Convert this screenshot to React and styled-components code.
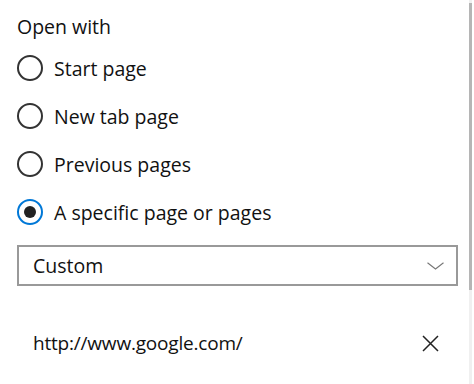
import React from "react";
import styled, { createGlobalStyle } from "styled-components";

const Global = createGlobalStyle`
  html, body { margin: 0; padding: 0; background: #fff; }
  body { font-family: "Open Sans", "Noto Sans", sans-serif; color: #111; }
`;

const Page = styled.div`
  display: flex;
  width: 474px;
  height: 384px;
  overflow: hidden;
  background: #fff;
`;

const Content = styled.div`
  flex: 1;
  display: flex;
  flex-direction: column;
  padding: 14px 11px 0 17px;
`;

const Title = styled.div`
  font-size: 19.5px;
  line-height: 26px;
  height: 30px;
`;

const Option = styled.label`
  display: flex;
  align-items: center;
  gap: 11px;
  height: 48px;
  font-size: 19.5px;
  cursor: pointer;
`;

const Radio = styled.span`
  box-sizing: border-box;
  width: 26px;
  height: 26px;
  border-radius: 50%;
  border: 2.5px solid ${(p) => (p.$checked ? "#0078d7" : "#333")};
  display: flex;
  align-items: center;
  justify-content: center;
  flex-shrink: 0;
  &::after {
    content: "";
    width: 12px;
    height: 12px;
    border-radius: 50%;
    background: #222;
    display: ${(p) => (p.$checked ? "block" : "none")};
  }
`;

const Select = styled.div`
  box-sizing: border-box;
  margin-top: 9px;
  height: 41px;
  border: 2px solid #999;
  display: flex;
  align-items: center;
  justify-content: space-between;
  padding: 0 12px 0 14px;
  font-size: 19.5px;
`;

const UrlRow = styled.div`
  display: flex;
  align-items: center;
  justify-content: space-between;
  margin-top: 38px;
  height: 38px;
  padding: 0 19px 0 16px;
  font-size: 19px;
  letter-spacing: -0.2px;
`;

const IconBtn = styled.span`
  display: flex;
  width: 17px;
  height: 17px;
`;

const ScrollTrack = styled.div`
  width: 3px;
  margin-right: 2px;
  display: flex;
  flex-direction: column;
  background: #f0f0f0;
`;

const Thumb = styled.div`
  margin-top: 3px;
  height: 287px;
  background: #b5b5b5;
`;

const options = ["Start page", "New tab page", "Previous pages", "A specific page or pages"];

export default function App() {
  return (
    <>
      <Global />
      <Page>
        <Content>
          <Title>Open with</Title>
          {options.map((o, i) => (
            <Option key={o}>
              <Radio $checked={i === 3} />
              {o}
            </Option>
          ))}
          <Select>
            <span>Custom</span>
            <svg width="17" height="8" viewBox="0 0 17 8">
              <path d="M0.5 0.8 L8.5 7 L16.5 0.8" fill="none" stroke="#777" strokeWidth="1.1" />
            </svg>
          </Select>
          <UrlRow>
            <span>http://www.google.com/</span>
            <IconBtn>
              <svg width="17" height="17" viewBox="0 0 17 17">
                <path d="M1 1 L16 16 M16 1 L1 16" stroke="#222" strokeWidth="1.5" />
              </svg>
            </IconBtn>
          </UrlRow>
        </Content>
        <ScrollTrack>
          <Thumb />
        </ScrollTrack>
      </Page>
    </>
  );
}
